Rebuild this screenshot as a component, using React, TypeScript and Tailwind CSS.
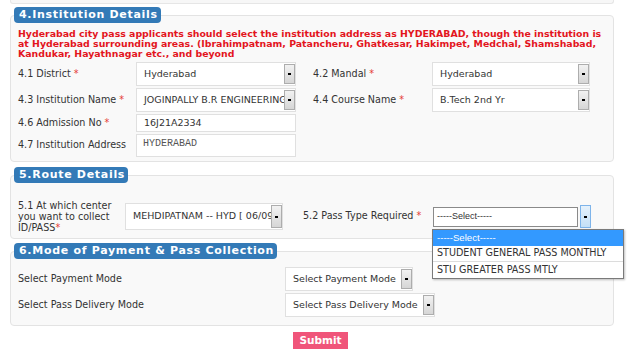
import React from 'react';

const Arrow = ({ focus = false }: { focus?: boolean }) => (
  <div
    className={
      focus
        ? 'w-[11px] self-stretch flex items-center justify-center border border-[#7eb4ea] bg-gradient-to-b from-[#e5f1fb] to-[#c4e0f7]'
        : 'w-[11px] self-stretch flex items-center justify-center border border-[#adadad] bg-gradient-to-b from-[#f2f2f2] to-[#d6d6d6]'
    }
  >
    <div className="w-[3px] h-[2px] bg-black" />
  </div>
);

const Select = ({ value, className }: { value: string; className: string }) => (
  <div className={`flex items-stretch bg-white border border-[#e0e0e0] ${className}`}>
    <div className="flex-1 min-w-0 flex items-center pl-[7px] overflow-hidden whitespace-nowrap text-[9.5px] text-[#333]">
      {value}
    </div>
    <div className="py-px flex">
      <Arrow />
    </div>
  </div>
);

const Star = () => <span className="text-[#e53935]"> *</span>;

const Section = ({
  title,
  className,
  children,
}: {
  title: string;
  className: string;
  children: React.ReactNode;
}) => (
  <div className={className}>
    <div className="relative z-10 ml-[4px] h-[16px] w-fit rounded-[4px] bg-[#337ab7] text-white font-bold text-[11px] tracking-[0.7px] flex items-center pl-[5px] pr-[3px] whitespace-nowrap">
      {title}
    </div>
    {children}
  </div>
);

export default function App() {
  return (
    <div className="w-[638px] h-[359px] bg-white overflow-hidden relative font-['DejaVu_Sans',Verdana,sans-serif] text-[#333]">
      <div className="ml-[10px] w-[604px]">
        <div className="h-[4px] bg-[#f7f7f7] border border-t-0 border-[#e6e6e6] rounded-b-[3px]" />

        {/* 4. Institution */}
        <Section title="4.Institution Details" className="mt-[3px]">
          <div className="-mt-[8px] border border-[#e3e3e3] rounded-[4px] bg-[#f9f9f9] pt-[13px] pb-[4px] pl-[7px]">
            <div className="text-[#e3151d] font-bold text-[9.4px] leading-[10px] whitespace-nowrap">
              Hyderabad city pass applicants should select the institution address as HYDERABAD, though the institution is
              <br />
              at Hyderabad surrounding areas. (Ibrahimpatnam, Patancheru, Ghatkesar, Hakimpet, Medchal, Shamshabad,
              <br />
              Kandukar, Hayathnagar etc., and beyond
            </div>
            <div className="mt-[3px] flex flex-col gap-[2px] text-[9.6px]">
              <div className="flex items-center">
                <div className="w-[118px]">
                  4.1 District<Star />
                </div>
                <Select value="Hyderabad" className="w-[160px] h-[24px]" />
                <div className="w-[136px] pl-[17px]">
                  4.2 Mandal<Star />
                </div>
                <Select value="Hyderabad" className="w-[158px] h-[24px]" />
              </div>
              <div className="flex items-center">
                <div className="w-[118px]">
                  4.3 Institution Name<Star />
                </div>
                <Select value="JOGINPALLY B.R ENGINEERING COLLEGE" className="w-[160px] h-[24px]" />
                <div className="w-[136px] pl-[17px]">
                  4.4 Course Name<Star />
                </div>
                <Select value="B.Tech 2nd Yr" className="w-[158px] h-[24px]" />
              </div>
              <div className="flex items-center">
                <div className="w-[118px]">
                  4.6 Admission No<Star />
                </div>
                <div className="w-[160px] h-[18px] bg-white border border-[#e0e0e0] flex items-center pl-[7px] text-[9.5px]">
                  16J21A2334
                </div>
              </div>
              <div className="flex items-center">
                <div className="w-[118px] whitespace-nowrap">4.7 Institution Address</div>
                <div className="w-[160px] h-[23px] bg-white border border-[#e0e0e0] pl-[6px] pt-[1px] font-['Liberation_Mono',monospace] text-[10px] text-[#555]">
                  HYDERABAD
                </div>
              </div>
            </div>
          </div>
        </Section>

        {/* 5. Route */}
        <Section title="5.Route Details" className="mt-[5px]">
          <div className="-mt-[8px] border border-[#e3e3e3] rounded-[4px] bg-[#f9f9f9] pt-[24px] pb-[5px] pl-[7px] text-[9.6px]">
            <div className="flex items-center">
              <div className="w-[107px] leading-[11px]">
                5.1 At which center
                <br />
                you want to collect
                <br />
                ID/PASS<span className="text-[#e53935]">*</span>
              </div>
              <Select value="MEHDIPATNAM -- HYD [ 06/09/2019 ]" className="w-[158px] h-[27px]" />
              <div className="w-[150px] pl-[20px] whitespace-nowrap">
                5.2 Pass Type Required<Star />
              </div>
              <div className="w-[145px] h-[20px] bg-white border border-[#8a8a8a] flex items-center pl-[3px] text-[9px] font-['Liberation_Sans',Arial,sans-serif]">
                -----Select-----
              </div>
              <div className="ml-[2px] h-[23px] flex">
                <Arrow focus />
              </div>
            </div>
          </div>
        </Section>

        {/* 6. Payment */}
        <Section title="6.Mode of Payment & Pass Collection" className="mt-[4px]">
          <div className="-mt-[8px] border border-[#e3e3e3] rounded-[4px] bg-[#f9f9f9] pt-[15px] pb-[8px] pl-[7px] text-[9.6px] flex flex-col gap-[2px]">
            <div className="flex items-center">
              <div className="w-[267px]">Select Payment Mode</div>
              <Select value="Select Payment Mode" className="w-[128px] h-[24px]" />
            </div>
            <div className="flex items-center">
              <div className="w-[267px]">Select Pass Delivery Mode</div>
              <Select value="Select Pass Delivery Mode" className="w-[150px] h-[24px]" />
            </div>
          </div>
        </Section>

        <div className="mt-[6px] pl-[283px]">
          <div className="w-[55px] h-[17px] bg-[#f0557a] text-white font-bold text-[10.5px] flex items-center justify-center">
            Submit
          </div>
        </div>
      </div>

      {/* open dropdown list */}
      <div className="absolute left-[432px] top-[229px] w-[192px] bg-white border border-[#7a7a7a] text-[9.6px] shadow-[1px_1px_2px_rgba(0,0,0,0.25)]">
        <div className="h-[16px] bg-[#3399ff] text-white flex items-center pl-[4px] font-['Liberation_Sans',Arial,sans-serif]">
          -----Select-----
        </div>
        <div className="h-[16px] flex items-center pl-[4px] border-b border-[#dcdcdc]">
          STUDENT GENERAL PASS MONTHLY
        </div>
        <div className="h-[16px] flex items-center pl-[4px]">STU GREATER PASS MTLY</div>
      </div>
    </div>
  );
}
